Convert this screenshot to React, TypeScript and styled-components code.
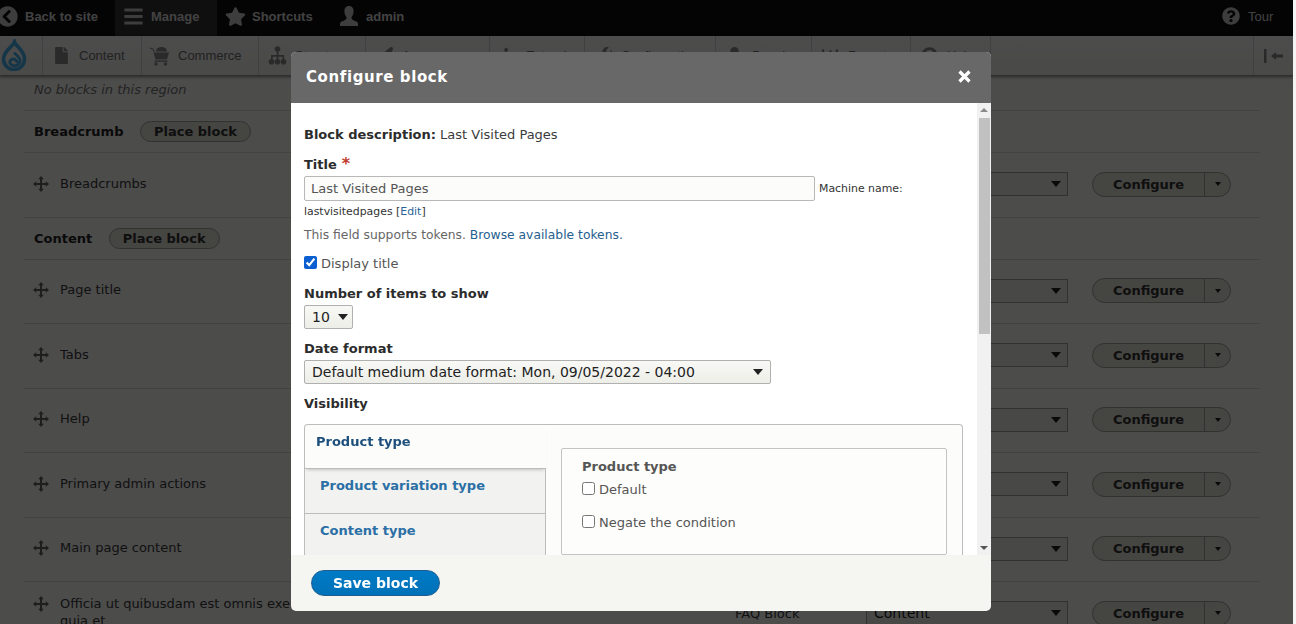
import type { ReactNode } from "react";
import styled, { createGlobalStyle } from "styled-components";
import {
  FaBars,
  FaChartBar,
  FaChevronCircleLeft,
  FaFile,
  FaPaintBrush,
  FaPuzzlePiece,
  FaQuestionCircle,
  FaStar,
  FaUser,
  FaWrench,
} from "react-icons/fa";

const Global = createGlobalStyle`
  html, body {
    margin: 0;
    height: 100%;
    overflow: hidden;
    background: #f4f4f4;
    font-family: "DejaVu Sans", sans-serif;
  }
  * { box-sizing: border-box; }
`;

const Page = styled.div`
  width: 1293px;
  height: 624px;
  overflow: hidden;
  background: #fdfdfb;
`;

const TopBar = styled.div`
  height: 36px;
  background: #0f0f0f;
  display: flex;
  align-items: center;
  font-family: "Liberation Sans", sans-serif;
  font-size: 13px;
  font-weight: bold;
`;

const TopItem = styled.div<{ $active?: boolean; $w: number; $thin?: boolean; $gap?: number }>`
  width: ${(p) => p.$w}px;
  height: 36px;
  flex: none;
  display: flex;
  align-items: center;
  gap: ${(p) => p.$gap ?? 7}px;
  padding: 0 0 4px 8px;
  color: #ddd;
  font-weight: ${(p) => (p.$thin ? "normal" : "bold")};
  background: ${(p) => (p.$active ? "#333" : "transparent")};
  svg {
    color: #ccc;
    font-size: 21px;
    flex: none;
  }
`;

const Spacer = styled.div`
  flex: 1;
`;

const Tray = styled.div`
  height: 39px;
  display: flex;
  background: linear-gradient(#fff, #f6f6f2);
  box-shadow: 0 1px 3px 1px rgba(0, 0, 0, 0.45);
  font-family: "Liberation Sans", sans-serif;
  font-size: 13px;
  color: #707070;
  position: relative;
`;

const Logo = styled.div`
  width: 43px;
  flex: none;
  border-right: 1px solid #d8d8d8;
  display: flex;
  align-items: center;
  padding: 0 0 2px 1px;
`;

const TrayTab = styled.div<{ $w: number; $pad?: number; $gap?: number }>`
  width: ${(p) => p.$w}px;
  flex: none;
  border-right: 1px solid #d8d8d8;
  display: flex;
  align-items: center;
  gap: ${(p) => p.$gap ?? 9}px;
  padding-left: ${(p) => p.$pad ?? 10}px;
  white-space: nowrap;
  svg {
    color: #8c8c8c;
    font-size: 17px;
    flex: none;
  }
`;

const Collapse = styled.div`
  margin-left: auto;
  width: 40px;
  border-left: 1px solid #d8d8d8;
  display: flex;
  align-items: center;
  justify-content: center;
`;

const Content = styled.div`
  padding: 0 33px 0 24px;
  color: #3b3b3b;
  font-size: 13px;
`;

const Row = styled.div<{ $h: number; $empty?: boolean }>`
  height: ${(p) => p.$h}px;
  border-bottom: 1px solid #dcdcd8;
  display: flex;
  align-items: center;
  padding: 0 0 ${(p) => (p.$empty ? 7 : 0)}px 10px;
`;

const EmptyText = styled.div`
  font-style: italic;
  color: #777;
`;

const RegionName = styled.div`
  font-weight: bold;
  color: #222;
  margin-right: 16.5px;
`;

const PlaceBlock = styled.div`
  height: 21px;
  padding: 0 13px;
  border: 1px solid #a6a6a0;
  border-radius: 11px;
  background: #e8e6dc;
  font-weight: bold;
  color: #333;
  display: flex;
  align-items: center;
`;

const BlockRow = styled.div<{ $h: number }>`
  height: ${(p) => p.$h}px;
  border-bottom: 1px solid #dcdcd8;
  padding: 0 0 2px 9px;
  display: grid;
  grid-template-columns: 702px 131px 202px 24px 139px;
  align-items: center;
`;

const BlockName = styled.div`
  display: flex;
  align-items: flex-start;
  gap: 11px;
  line-height: 17px;
  margin-top: -2px;
  width: 425px;
  svg {
    flex: none;
    margin-top: 1px;
  }
`;

const Category = styled.div`
  line-height: 17px;
`;

const RegionSelect = styled.div`
  grid-column: 3;
  height: 24px;
  border: 1px solid #a5a5a5;
  background: #f2f1eb;
  font-size: 14px;
  color: #222;
  display: flex;
  align-items: center;
  justify-content: space-between;
  padding: 0 6px 0 7px;
`;

const Caret = styled.span<{ $small?: boolean }>`
  width: 0;
  height: 0;
  border-style: solid;
  border-color: #222 transparent transparent;
  border-width: ${(p) => (p.$small ? "4px 3.5px 0" : "6px 5px 0")};
`;

const Operations = styled.div`
  grid-column: 5;
  height: 25px;
  border: 1px solid #a6a6a0;
  border-radius: 13px;
  background: #e8e6dc;
  display: flex;
  font-weight: bold;
  color: #333;
`;

const OpLabel = styled.div`
  flex: 1;
  display: flex;
  align-items: center;
  justify-content: center;
`;

const OpToggle = styled.div`
  width: 26px;
  border-left: 1px solid #a6a6a0;
  display: flex;
  align-items: center;
  justify-content: center;
`;

const Overlay = styled.div`
  position: fixed;
  inset: 0 3px 0 0;
  background: rgba(0, 0, 0, 0.7);
`;

const Dialog = styled.div`
  position: fixed;
  left: 291px;
  top: 52px;
  width: 700px;
  height: 559px;
  display: flex;
  flex-direction: column;
  border-radius: 5px;
  overflow: hidden;
  background: #f5f5f2;
`;

const DialogHead = styled.div`
  height: 51px;
  flex: none;
  background: #686868;
  color: #fff;
  font-weight: bold;
  font-size: 15px;
  letter-spacing: 0.6px;
  padding: 0 20px 2px 15px;
  display: flex;
  align-items: center;
  justify-content: space-between;
`;

const Body = styled.div`
  height: 452px;
  flex: none;
  display: flex;
  background: #fff;
`;

const Form = styled.div`
  flex: 1;
  min-width: 0;
  overflow: hidden;
  padding: 23px 14px 0 13px;
  font-size: 13px;
  color: #3b3b3b;
`;

const Bold = styled.b`
  color: #2c2c2c;
`;

const Description = styled.div`
  line-height: 17px;
`;

const TitleLabel = styled.div`
  margin-top: 13px;
  line-height: 17px;
  font-weight: bold;
  color: #2c2c2c;
  display: flex;
  gap: 5px;
`;

const Star = styled.span`
  color: #c0392b;
  font-size: 16px;
  line-height: 15px;
`;

const TitleLine = styled.div`
  margin-top: 3px;
  display: flex;
  align-items: center;
  gap: 4px;
`;

const TextInput = styled.div`
  width: 511px;
  height: 25px;
  border: 1px solid #b8b8b8;
  border-radius: 2px;
  background: #fcfcfa;
  padding: 0 6px;
  display: flex;
  align-items: center;
  color: #555;
`;

const Small = styled.div`
  font-size: 10.9px;
  color: #333;
  line-height: 14px;
`;

const MachineLine = styled(Small)`
  margin-top: 4px;
`;

const Link = styled.span`
  color: #2a6496;
`;

const Help = styled.div`
  margin-top: 8px;
  font-size: 12.32px;
  line-height: 17px;
  color: #666;
  span {
    color: #26608f;
  }
`;

const CheckLine = styled.label<{ $top: number }>`
  margin-top: ${(p) => p.$top}px;
  display: flex;
  align-items: center;
  gap: 4px;
  line-height: 17px;
  color: #555;
  input {
    margin: 0;
    width: 13px;
    height: 13px;
    position: relative;
    top: -1px;
    accent-color: #0b5fd0;
  }
`;

const FieldLabel = styled.div<{ $top: number }>`
  margin-top: ${(p) => p.$top}px;
  font-weight: bold;
  line-height: 17px;
  color: #2c2c2c;
`;

const Select = styled.div<{ $w: number; $pr: number }>`
  width: ${(p) => p.$w}px;
  height: 24px;
  margin-top: 3px;
  border: 1px solid #b0b0b0;
  border-radius: 2px;
  background: linear-gradient(#f8f8f5, #eeeee8);
  padding: 0 ${(p) => p.$pr}px 0 7px;
  font-size: 14px;
  color: #222;
  display: flex;
  align-items: center;
  justify-content: space-between;
  white-space: nowrap;
`;

const TabsBox = styled.div`
  margin-top: 12px;
  width: 659px;
  height: 180px;
  border: 1px solid #bdbdbd;
  border-bottom: 0;
  border-radius: 4px 4px 0 0;
  background: #fcfcfa;
  display: flex;
  overflow: hidden;
`;

const TabList = styled.div`
  width: 241px;
  flex: none;
`;

const ActiveTab = styled.div`
  height: 44px;
  padding: 8px 11px;
  font-weight: bold;
  color: #1d4f7c;
  line-height: 17px;
  position: relative;
  z-index: 1;
  border-bottom: 1px solid #bdbdbd;
  box-shadow: 0 3px 3px -2px rgba(0, 0, 0, 0.2);
`;

const InactiveTab = styled.div<{ $h: number }>`
  height: ${(p) => p.$h}px;
  padding: 8px 15px;
  background: #f2f2f0;
  border-right: 1px solid #bdbdbd;
  border-bottom: 1px solid #bdbdbd;
  font-weight: bold;
  color: #2a6fa5;
  line-height: 17px;
`;

const TabPane = styled.div`
  flex: 1;
  padding: 23px 15px 0;
  min-width: 0;
`;

const Fieldset = styled.div`
  height: 107px;
  width: 386px;
  border: 1px solid #c4c4c4;
  border-radius: 2px;
  padding: 9px 20px;
  background: #fdfdfb;
`;

const FieldsetTitle = styled.div`
  font-weight: bold;
  color: #555;
  line-height: 17px;
`;

const Scrollbar = styled.div`
  width: 14px;
  flex: none;
  background: #f1f1f1;
  display: flex;
  flex-direction: column;
  align-items: center;
`;

const Thumb = styled.div`
  width: 11px;
  height: 216px;
  margin-top: 6px;
  background: #c1c1c1;
`;

const ArrowUp = styled.span`
  margin-top: 5px;
  width: 0;
  height: 0;
  border-left: 4px solid transparent;
  border-right: 4px solid transparent;
  border-bottom: 4px solid #8a8a8a;
`;

const ArrowDown = styled.span`
  margin-top: auto;
  margin-bottom: 5px;
  width: 0;
  height: 0;
  border-left: 4px solid transparent;
  border-right: 4px solid transparent;
  border-top: 4px solid #555;
`;

const Footer = styled.div`
  flex: 1;
  padding: 15px 20px 0;
`;

const SaveButton = styled.div`
  width: 129px;
  height: 26px;
  border: 1px solid #1e5c90;
  border-radius: 13px;
  background: linear-gradient(#007bc6, #0071b8);
  color: #fff;
  font-size: 14px;
  font-weight: bold;
  display: flex;
  align-items: center;
  justify-content: center;
`;

function Move() {
  return (
    <svg width="16" height="16" viewBox="0 0 16 16" fill="#666">
      <path d="M8 0l2.800 3.200H9V7h3.800V5.200L16 8l-3.200 2.800V9H9v3.800h1.800L8 16l-2.800-3.200H7V9H3.200v1.800L0 8l3.200-2.800V7H7V3.200H5.200z" />
    </svg>
  );
}

function DrupalDrop() {
  return (
    <svg width="26" height="32" viewBox="0 0 26 32" fill="none">
      <path
        d="M13.500 3c1 4 10 8.500 10 17a10.500 10.500 0 0 1-21 0C2.500 12 12 7.500 13.500 3z"
        stroke="#46b4f0"
        strokeWidth="3.600"
      />
      <path
        d="M13 13.500c2 2.500 6 4.500 6 8a5.500 5.500 0 0 1-9.500 3.500c-2-2.500.5-5 3-5 2 0 3.500 2 3.500 4"
        stroke="#46b4f0"
        strokeWidth="2.800"
      />
    </svg>
  );
}

function CartIcon() {
  return (
    <svg width="20" height="20" viewBox="0 0 20 20" fill="#8c8c8c">
      <path d="M0 1.500l3.500 1.200 1.300 2.800-1 .4-1.100-2.400L0 2.700z" />
      <path d="M6 5.500a5.500 4.500 0 0 1 11 0z" />
      <path d="M3.500 6.500h15.500l-2 7H5.500z" />
      <rect x="4.500" y="14.500" width="13" height="1.400" />
      <circle cx="6" cy="18" r="1.700" />
      <circle cx="15.500" cy="18" r="1.700" />
    </svg>
  );
}

function TreeIcon() {
  return (
    <svg width="19" height="19" viewBox="0 0 19 19" fill="#8c8c8c">
      <circle cx="9.500" cy="3" r="2.800" />
      <rect x="8.700" y="4" width="1.800" height="11" />
      <path d="M3 9h13.200v6h-1.800v-4.200H4.800V15H3z" />
      <circle cx="3.500" cy="15.800" r="2.800" />
      <circle cx="9.500" cy="15.800" r="2.800" />
      <circle cx="15.500" cy="15.800" r="2.800" />
    </svg>
  );
}

function BustIcon() {
  return (
    <svg width="18" height="21" viewBox="0 0 18 21" fill="#ccc">
      <path d="M9 0c3 0 4.600 2.200 4.600 5.200 0 2.500-.9 4.500-2 5.800-.4 1.500.2 2.500 1.800 3.200 2 .8 4.600 1.700 4.600 3.300V20H0v-2.500c0-1.600 2.600-2.500 4.600-3.300 1.600-.7 2.200-1.700 1.800-3.200-1.100-1.300-2-3.300-2-5.800C4.400 2.200 6 0 9 0z" />
    </svg>
  );
}

function CollapseIcon() {
  return (
    <svg width="20" height="14" viewBox="0 0 20 14" fill="#8a8a8a">
      <rect x="0" y="0" width="2.500" height="14" />
      <path d="M7 7l5-4v2.500h7v3h-7V11z" />
    </svg>
  );
}

function Block({
  name,
  h,
  category,
  region,
}: {
  name: ReactNode;
  h: number;
  category?: string;
  region: string;
}) {
  return (
    <BlockRow $h={h}>
      <BlockName>
        <Move />
        <div>{name}</div>
      </BlockName>
      <Category>{category}</Category>
      <RegionSelect>
        {region}
        <Caret />
      </RegionSelect>
      <Operations>
        <OpLabel>Configure</OpLabel>
        <OpToggle>
          <Caret $small />
        </OpToggle>
      </Operations>
    </BlockRow>
  );
}

export default function App() {
  return (
    <>
      <Global />
      <Page>
        <TopBar>
          <TopItem $w={115}>
            <FaChevronCircleLeft style={{ marginLeft: -11 }} />
            Back to site
          </TopItem>
          <TopItem $active $w={102}>
            <FaBars />
            Manage
          </TopItem>
          <TopItem $w={115} $gap={6}>
            <FaStar />
            Shortcuts
          </TopItem>
          <TopItem $w={100} $gap={8}>
            <BustIcon />
            admin
          </TopItem>
          <Spacer />
          <TopItem $thin $w={79}>
            <FaQuestionCircle style={{ fontSize: 18, marginRight: 1 }} />
            Tour
          </TopItem>
        </TopBar>
        <Tray>
          <Logo>
            <DrupalDrop />
          </Logo>
          <TrayTab $w={99}>
            <FaFile />
            Content
          </TrayTab>
          <TrayTab $w={117} $pad={8} $gap={8}>
            <CartIcon />
            Commerce
          </TrayTab>
          <TrayTab $w={107} $pad={9} $gap={8}>
            <TreeIcon />
            Structure
          </TrayTab>
          <TrayTab $w={124}>
            <FaPaintBrush />
            Appearance
          </TrayTab>
          <TrayTab $w={95}>
            <FaPuzzlePiece />
            Extend
          </TrayTab>
          <TrayTab $w={131}>
            <FaWrench />
            Configuration
          </TrayTab>
          <TrayTab $w={96}>
            <FaUser />
            People
          </TrayTab>
          <TrayTab $w={99}>
            <FaChartBar />
            Reports
          </TrayTab>
          <TrayTab $w={80}>
            <FaQuestionCircle />
            Help
          </TrayTab>
          <Collapse>
            <CollapseIcon />
          </Collapse>
        </Tray>
        <Content>
          <Row $h={36} $empty>
            <EmptyText>No blocks in this region</EmptyText>
          </Row>
          <Row $h={42}>
            <RegionName>Breadcrumb</RegionName>
            <PlaceBlock>Place block</PlaceBlock>
          </Row>
          <Block name="Breadcrumbs" h={65} region="Breadcrumb" />
          <Row $h={42}>
            <RegionName>Content</RegionName>
            <PlaceBlock>Place block</PlaceBlock>
          </Row>
          <Block name="Page title" h={64} region="Content" />
          <Block name="Tabs" h={65} region="Content" />
          <Block name="Help" h={64} region="Content" />
          <Block name="Primary admin actions" h={65} region="Content" />
          <Block name="Main page content" h={64} region="Content" />
          <Block
            name="Officia ut quibusdam est omnis exercitationem beatae nemo quia et"
            h={65}
            category="FAQ Block"
            region="Content"
          />
        </Content>
      </Page>
      <Overlay />
      <Dialog>
        <DialogHead>
          Configure block
          <svg width="13" height="13" viewBox="0 0 13 13" stroke="#fff" strokeWidth="3.200">
            <path d="M1.500 1.500l10 10M11.500 1.500l-10 10" />
          </svg>
        </DialogHead>
        <Body>
          <Form>
            <Description>
              <Bold>Block description:</Bold> Last Visited Pages
            </Description>
            <TitleLabel>
              Title <Star>*</Star>
            </TitleLabel>
            <TitleLine>
              <TextInput>Last Visited Pages</TextInput>
              <Small>Machine name:</Small>
            </TitleLine>
            <MachineLine>
              lastvisitedpages [<Link>Edit</Link>]
            </MachineLine>
            <Help>
              This field supports tokens. <span>Browse available tokens.</span>
            </Help>
            <CheckLine $top={11}>
              <input type="checkbox" defaultChecked />
              Display title
            </CheckLine>
            <FieldLabel $top={13}>Number of items to show</FieldLabel>
            <Select $w={49} $pr={4}>
              10
              <Caret />
            </Select>
            <FieldLabel $top={11}>Date format</FieldLabel>
            <Select $w={467} $pr={7}>
              Default medium date format: Mon, 09/05/2022 - 04:00
              <Caret />
            </Select>
            <FieldLabel $top={11}>Visibility</FieldLabel>
            <TabsBox>
              <TabList>
                <ActiveTab>Product type</ActiveTab>
                <InactiveTab $h={45}>Product variation type</InactiveTab>
                <InactiveTab $h={60}>Content type</InactiveTab>
              </TabList>
              <TabPane>
                <Fieldset>
                  <FieldsetTitle>Product type</FieldsetTitle>
                  <CheckLine $top={6}>
                    <input type="checkbox" />
                    Default
                  </CheckLine>
                  <CheckLine $top={16}>
                    <input type="checkbox" />
                    Negate the condition
                  </CheckLine>
                </Fieldset>
              </TabPane>
            </TabsBox>
          </Form>
          <Scrollbar>
            <ArrowUp />
            <Thumb />
            <ArrowDown />
          </Scrollbar>
        </Body>
        <Footer>
          <SaveButton>Save block</SaveButton>
        </Footer>
      </Dialog>
    </>
  );
}
